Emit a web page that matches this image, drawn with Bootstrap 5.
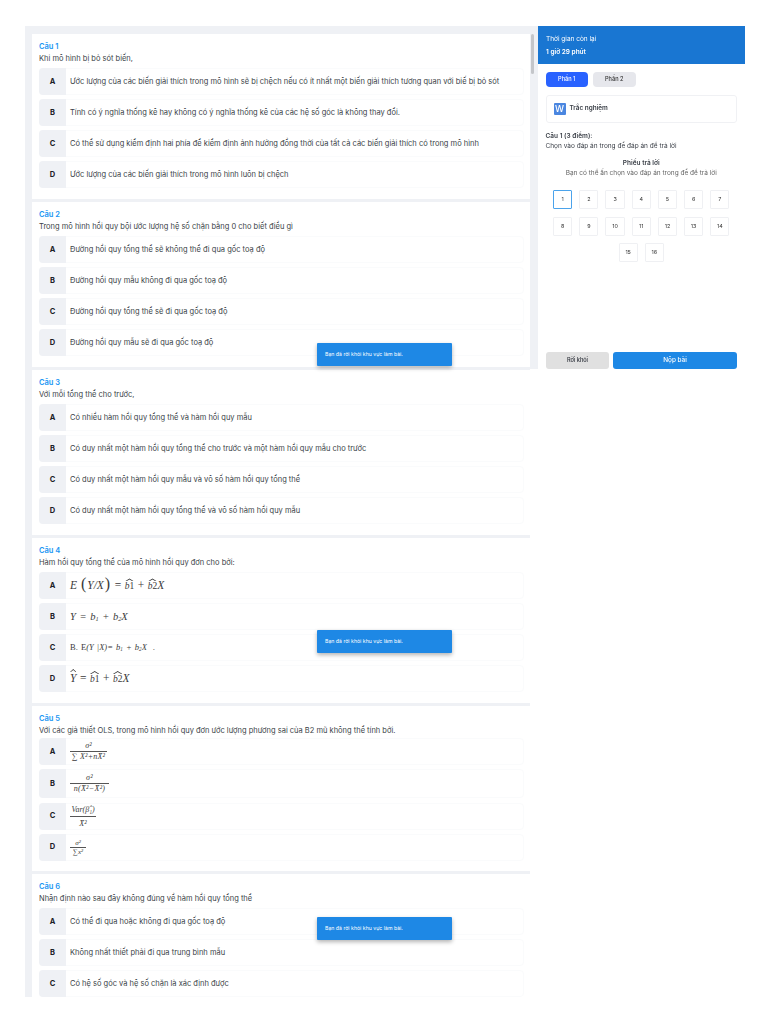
<!DOCTYPE html>
<html lang="vi">
<head>
    <meta charset="UTF-8">
    <meta name="viewport" content="width=device-width, initial-scale=1.0">
    <title>Làm bài</title>
    <link href="https://cdn.jsdelivr.net/npm/bootstrap@5.3.0/dist/css/bootstrap.min.css" rel="stylesheet">
    <style>
        html, body {
            height: 1024px;
            overflow: hidden;
            background: #fff;
        }
        body {
            font-family: Inter, "Noto Sans", sans-serif;
            color: #3a3f47;
        }
        .page-root {
            position: relative;
            height: 1024px;
            filter: blur(.35px);
        }
        .exam-wrap {
            padding: 26px 23px 0 25px;
            align-items: flex-start;
        }
        .exam-left {
            width: 505px;
            flex: none;
            padding: 8px 0 0 7px;
            background: #eff1f5;
            height: 971px;
            overflow: hidden;
        }
        .exam-rail {
            width: 8px;
            height: 343px;
            flex: none;
            padding: 8px 0 0 1px;
            background: #eff1f5;
        }
        .rail-thumb {
            width: 3px;
            height: 40px;
            background: #c4c6ca;
            border-radius: 2px;
        }
        .q-card {
            background: #fff;
            height: 165px;
            margin-bottom: 3px;
            padding: 7px 6px 0 7px;
        }
        .q-num {
            font-size: 7.5px;
            line-height: 12px;
            font-weight: 600;
            color: #2196f3;
        }
        .q-text {
            font-size: 7.5px;
            line-height: 12px;
            margin-bottom: 3px;
        }
        .opt-row {
            height: 27px;
            margin-bottom: 4px;
            border: 1px solid #fafbfc;
            border-radius: 4px;
            font-size: 7.5px;
        }
        .opt-key {
            width: 27px;
            flex: none;
            margin: -1px 0 -1px -1px;
            background: #eff1f5;
            border-radius: 4px 0 0 4px;
            font-weight: 700;
            color: #1c2027;
        }
        .opt-body {
            padding-left: 4px;
        }
        .q-tight .q-text { margin-bottom: 1px; }
        .q-tight .opt-tall { height: 29px; margin-bottom: 4.5px; }
        .fml {
            font-family: "Liberation Serif", serif;
            font-style: italic;
            font-size: 11.5px;
            color: #3a3a3a;
            white-space: nowrap;
        }
        .fml i { font-style: normal; }
        .fml sub { font-size: 60%; }
        .fml-paren { font-size: 16px; line-height: 1; font-weight: 300; font-style: normal; padding: 0 1px; }
        .fml-b { font-size: 10.5px; word-spacing: 1px; }
        .fml-c { font-size: 8.5px; word-spacing: 1px; }
        .wide-hat {
            position: relative;
            display: inline-block;
            font-size: 9.5px;
        }
        .wide-hat::before {
            content: "";
            position: absolute;
            left: 0;
            right: 0;
            top: -1px;
            height: 3px;
            background: #3a3a3a;
            clip-path: polygon(0 100%, 50% 0, 100% 100%, 86% 100%, 50% 35%, 14% 100%);
        }
        .hat-y { font-size: 11.5px; }
        .fml-frac {
            display: inline-flex;
            flex-direction: column;
            align-items: center;
            font-size: 8px;
            line-height: 10px;
        }
        .fml-frac > span:first-child {
            border-bottom: 1px solid #555;
            align-self: stretch;
            text-align: center;
        }
        .frac-a { width: 37px; letter-spacing: .2px; }
        .frac-b { width: 39px; letter-spacing: .3px; }
        .frac-c { width: 26px; line-height: 13px; }
        .frac-d { width: 16px; font-size: 7px; line-height: 8px; }
        .exam-side {
            width: 207px;
            flex: none;
        }
        .side-head {
            height: 38px;
            background: #1976d2;
            color: #fff;
            padding: 6.5px 8px;
            font-size: 6.5px;
            line-height: 13px;
        }
        .side-head b { font-weight: 600; }
        .side-body { padding: 8px 8px 0 7.5px; height: 288px; }
        .part-btn {
            height: 15px;
            width: 42.5px;
            border-radius: 4px;
            font-size: 5.6px;
            font-weight: 500;
            background: #e6e7ec;
            color: #333;
        }
        .part-on { background: #2962ff; color: #fff; }
        .part-gap { gap: 5px; }
        .type-box {
            height: 28px;
            border: 1px solid #f0f1f4;
            border-radius: 3px;
            margin: 8px 0 7.5px;
            padding-left: 7px;
            font-size: 6.4px;
            font-weight: 600;
        }
        .word-ico {
            width: 12px;
            height: 12px;
            background: #4a86e0;
            color: #fff;
            font-size: 9px;
            font-weight: 500;
            border-radius: 1px;
        }
        .side-note { font-size: 6.5px; line-height: 10px; }
        .side-note b { font-weight: 600; }
        .sheet-title {
            font-size: 6.5px;
            line-height: 10px;
            font-weight: 600;
            margin-top: 7.5px;
        }
        .sheet-sub { font-size: 6.5px; line-height: 10px; color: #666; }
        .num-grid {
            gap: 7.5px 7px;
            margin-top: 12px;
            padding: 0 7px;
        }
        .num-cell {
            width: 19.2px;
            height: 19px;
            border: 1px solid #eff0f3;
            border-radius: 1px;
            font-size: 5.4px;
            color: #333;
        }
        .num-on { border-color: #4ba3eb; }
        .side-actions { padding-left: 8px; gap: 4px; }
        .btn-leave {
            width: 63px;
            height: 17px;
            background: #e0e0e0;
            border-radius: 3px;
            font-size: 5.6px;
            font-weight: 500;
            color: #2b2f38;
        }
        .btn-send {
            width: 124px;
            height: 17px;
            background: #1e88e5;
            color: #fff;
            border-radius: 3px;
            font-size: 6.4px;
            font-weight: 500;
        }
        .leave-toast {
            position: absolute;
            left: 317px;
            width: 135px;
            height: 23px;
            padding-left: 8px;
            background: #1e88e5;
            color: #fff;
            font-size: 5.2px;
            border-radius: 1px;
            box-shadow: 0 2px 4px rgba(0, 0, 0, .3);
        }
    </style>
</head>
<body>
    <div class="page-root">
    <div class="exam-wrap d-flex">
        <div class="exam-left">
            <div class="q-card">
                <div class="q-num">Câu 1</div>
                <div class="q-text">Khi mô hình bị bỏ sót biến,</div>
                <div class="opt-row d-flex"><div class="opt-key d-flex align-items-center justify-content-center">A</div><div class="opt-body d-flex align-items-center">Ước lượng của các biến giải thích trong mô hình sẽ bị chệch nếu có ít nhất một biến giải thích tương quan với biế bị bỏ sót</div></div>
                <div class="opt-row d-flex"><div class="opt-key d-flex align-items-center justify-content-center">B</div><div class="opt-body d-flex align-items-center">Tính có ý nghĩa thống kê hay không có ý nghĩa thống kê của các hệ số góc là không thay đổi.</div></div>
                <div class="opt-row d-flex"><div class="opt-key d-flex align-items-center justify-content-center">C</div><div class="opt-body d-flex align-items-center">Có thể sử dụng kiểm định hai phía để kiểm định ảnh hưởng đồng thời của tất cả các biến giải thích có trong mô hình</div></div>
                <div class="opt-row d-flex"><div class="opt-key d-flex align-items-center justify-content-center">D</div><div class="opt-body d-flex align-items-center">Ước lượng của các biến giải thích trong mô hình luôn bị chệch</div></div>
            </div>
            <div class="q-card">
                <div class="q-num">Câu 2</div>
                <div class="q-text">Trong mô hình hồi quy bội ước lượng hệ số chặn bằng 0 cho biết điều gì</div>
                <div class="opt-row d-flex"><div class="opt-key d-flex align-items-center justify-content-center">A</div><div class="opt-body d-flex align-items-center">Đường hồi quy tổng thể sẽ không thể đi qua gốc toạ độ</div></div>
                <div class="opt-row d-flex"><div class="opt-key d-flex align-items-center justify-content-center">B</div><div class="opt-body d-flex align-items-center">Đường hồi quy mẫu không đi qua gốc toạ độ</div></div>
                <div class="opt-row d-flex"><div class="opt-key d-flex align-items-center justify-content-center">C</div><div class="opt-body d-flex align-items-center">Đường hồi quy tổng thể sẽ đi qua gốc toạ độ</div></div>
                <div class="opt-row d-flex"><div class="opt-key d-flex align-items-center justify-content-center">D</div><div class="opt-body d-flex align-items-center">Đường hồi quy mẫu sẽ đi qua gốc toạ độ</div></div>
            </div>
            <div class="q-card">
                <div class="q-num">Câu 3</div>
                <div class="q-text">Với mỗi tổng thể cho trước,</div>
                <div class="opt-row d-flex"><div class="opt-key d-flex align-items-center justify-content-center">A</div><div class="opt-body d-flex align-items-center">Có nhiều hàm hồi quy tổng thể và hàm hồi quy mẫu</div></div>
                <div class="opt-row d-flex"><div class="opt-key d-flex align-items-center justify-content-center">B</div><div class="opt-body d-flex align-items-center">Có duy nhất một hàm hồi quy tổng thể cho trước và một hàm hồi quy mẫu cho trước</div></div>
                <div class="opt-row d-flex"><div class="opt-key d-flex align-items-center justify-content-center">C</div><div class="opt-body d-flex align-items-center">Có duy nhất một hàm hồi quy mẫu và vô số hàm hồi quy tổng thể</div></div>
                <div class="opt-row d-flex"><div class="opt-key d-flex align-items-center justify-content-center">D</div><div class="opt-body d-flex align-items-center">Có duy nhất một hàm hồi quy tổng thể và vô số hàm hồi quy mẫu</div></div>
            </div>
            <div class="q-card">
                <div class="q-num">Câu 4</div>
                <div class="q-text">Hàm hồi quy tổng thể của mô hình hồi quy đơn cho bởi:</div>
                <div class="opt-row d-flex"><div class="opt-key d-flex align-items-center justify-content-center">A</div><div class="opt-body d-flex align-items-center fml"><span>E&nbsp;<span class="fml-paren">(</span>Y/X<span class="fml-paren">)</span> = <span class="wide-hat">b<i>1</i></span> + <span class="wide-hat">b<i>2</i></span>X</span></div></div>
                <div class="opt-row d-flex"><div class="opt-key d-flex align-items-center justify-content-center">B</div><div class="opt-body d-flex align-items-center fml fml-b"><span>Y = b<sub>1</sub> + b<sub>2</sub>X</span></div></div>
                <div class="opt-row d-flex"><div class="opt-key d-flex align-items-center justify-content-center">C</div><div class="opt-body d-flex align-items-center fml fml-c"><span><i>B. E</i>(Y |X)= b<sub>1</sub> + b<sub>2</sub>X &nbsp;.</span></div></div>
                <div class="opt-row d-flex"><div class="opt-key d-flex align-items-center justify-content-center">D</div><div class="opt-body d-flex align-items-center fml"><span><span class="wide-hat hat-y">Y</span> = <span class="wide-hat">b<i>1</i></span> + <span class="wide-hat">b<i>2</i></span>X</span></div></div>
            </div>
            <div class="q-card q-tight">
                <div class="q-num">Câu 5</div>
                <div class="q-text">Với các giả thiết OLS, trong mô hình hồi quy đơn ước lượng phương sai của B2 mũ không thể tính bởi.</div>
                <div class="opt-row d-flex"><div class="opt-key d-flex align-items-center justify-content-center">A</div><div class="opt-body d-flex align-items-center fml"><span class="fml-frac frac-a"><span>σ²</span><span>∑ X²+nX̄²</span></span></div></div>
                <div class="opt-row opt-tall d-flex"><div class="opt-key d-flex align-items-center justify-content-center">B</div><div class="opt-body d-flex align-items-center fml"><span class="fml-frac frac-b"><span>σ²</span><span>n(X̄²−X̄²)</span></span></div></div>
                <div class="opt-row d-flex"><div class="opt-key d-flex align-items-center justify-content-center">C</div><div class="opt-body d-flex align-items-center fml"><span class="fml-frac frac-c"><span>Var(β̂₁)</span><span>X̄²</span></span></div></div>
                <div class="opt-row d-flex"><div class="opt-key d-flex align-items-center justify-content-center">D</div><div class="opt-body d-flex align-items-center fml"><span class="fml-frac frac-d"><span>σ²</span><span>∑x²</span></span></div></div>
            </div>
            <div class="q-card">
                <div class="q-num">Câu 6</div>
                <div class="q-text">Nhận định nào sau đây không đúng về hàm hồi quy tổng thể</div>
                <div class="opt-row d-flex"><div class="opt-key d-flex align-items-center justify-content-center">A</div><div class="opt-body d-flex align-items-center">Có thể đi qua hoặc không đi qua gốc toạ độ</div></div>
                <div class="opt-row d-flex"><div class="opt-key d-flex align-items-center justify-content-center">B</div><div class="opt-body d-flex align-items-center">Không nhất thiết phải đi qua trung bình mẫu</div></div>
                <div class="opt-row d-flex"><div class="opt-key d-flex align-items-center justify-content-center">C</div><div class="opt-body d-flex align-items-center">Có hệ số góc và hệ số chặn là xác định được</div></div>
            </div>
        </div>
        <div class="exam-rail"><div class="rail-thumb"></div></div>
        <div class="exam-side">
            <div class="side-head">
                <div>Thời gian còn lại</div>
                <b>1 giờ 29 phút</b>
            </div>
            <div class="side-body">
                <div class="d-flex part-gap">
                    <div class="part-btn part-on d-flex align-items-center justify-content-center">Phần 1</div>
                    <div class="part-btn d-flex align-items-center justify-content-center">Phần 2</div>
                </div>
                <div class="type-box d-flex align-items-center gap-1">
                    <span class="word-ico d-flex align-items-center justify-content-center">W</span>
                    <span>Trắc nghiệm</span>
                </div>
                <div class="side-note"><b>Câu 1 (3 điểm):</b><br>Chọn vào đáp án trong đề đáp án để trả lời</div>
                <div class="sheet-title text-center">Phiếu trả lời</div>
                <div class="sheet-sub text-center">Bạn có thể ấn chọn vào đáp án trong đề để trả lời</div>
                <div class="num-grid d-flex flex-wrap justify-content-center">
                    <div class="num-cell num-on d-flex align-items-center justify-content-center">1</div>
                    <div class="num-cell d-flex align-items-center justify-content-center">2</div>
                    <div class="num-cell d-flex align-items-center justify-content-center">3</div>
                    <div class="num-cell d-flex align-items-center justify-content-center">4</div>
                    <div class="num-cell d-flex align-items-center justify-content-center">5</div>
                    <div class="num-cell d-flex align-items-center justify-content-center">6</div>
                    <div class="num-cell d-flex align-items-center justify-content-center">7</div>
                    <div class="num-cell d-flex align-items-center justify-content-center">8</div>
                    <div class="num-cell d-flex align-items-center justify-content-center">9</div>
                    <div class="num-cell d-flex align-items-center justify-content-center">10</div>
                    <div class="num-cell d-flex align-items-center justify-content-center">11</div>
                    <div class="num-cell d-flex align-items-center justify-content-center">12</div>
                    <div class="num-cell d-flex align-items-center justify-content-center">13</div>
                    <div class="num-cell d-flex align-items-center justify-content-center">14</div>
                    <div class="num-cell d-flex align-items-center justify-content-center">15</div>
                    <div class="num-cell d-flex align-items-center justify-content-center">16</div>
                </div>
            </div>
            <div class="side-actions d-flex">
                <div class="btn-leave d-flex align-items-center justify-content-center">Rời khỏi</div>
                <div class="btn-send d-flex align-items-center justify-content-center">Nộp bài</div>
            </div>
        </div>
    </div>
    <div class="leave-toast d-flex align-items-center" style="top: 343px">Bạn đã rời khỏi khu vực làm bài.</div>
    <div class="leave-toast d-flex align-items-center" style="top: 630px">Bạn đã rời khỏi khu vực làm bài.</div>
    <div class="leave-toast d-flex align-items-center" style="top: 917px">Bạn đã rời khỏi khu vực làm bài.</div>
    </div>
</body>
</html>
